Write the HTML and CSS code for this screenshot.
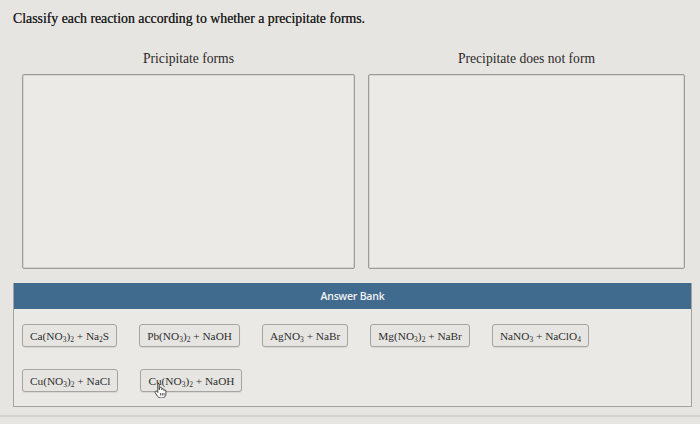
FILE: index.html
```html
<!DOCTYPE html>
<html lang="en">
<head>
  <meta charset="UTF-8">
  <title>Classify Reactions</title>
  <link rel="stylesheet" href="styles.css">
</head>
<body>
  <div class="page">
    <h1 class="prompt">Classify each reaction according to whether a precipitate forms.</h1>

    <!-- Drop zones -->
    <div class="zones">
      <div class="zone">
        <div class="zone-label">Pricipitate forms</div>
        <div class="zone-box"></div>
      </div>
      <div class="zone">
        <div class="zone-label">Precipitate does not form</div>
        <div class="zone-box"></div>
      </div>
    </div>

    <!-- Answer bank -->
    <div class="bank">
      <div class="bank-header">Answer Bank</div>
      <div class="bank-body">
        <div class="tile">Ca(NO<sub>3</sub>)<sub>2</sub> + Na<sub>2</sub>S</div>
        <div class="tile">Pb(NO<sub>3</sub>)<sub>2</sub> + NaOH</div>
        <div class="tile">AgNO<sub>3</sub> + NaBr</div>
        <div class="tile">Mg(NO<sub>3</sub>)<sub>2</sub> + NaBr</div>
        <div class="tile">NaNO<sub>3</sub> + NaClO<sub>4</sub></div>
        <div class="tile">Cu(NO<sub>3</sub>)<sub>2</sub> + NaCl</div>
        <div class="tile">Cu(NO<sub>3</sub>)<sub>2</sub> + NaOH
          <svg class="cursor" width="13" height="16" viewBox="0 0 13 16">
            <path d="M4 1.2c.7 0 1.2.5 1.2 1.2v5.2l.3-.1V6.3c0-.6.5-1.1 1.1-1.1s1.1.5 1.1 1.1v1.3c.1-.6.6-1 1.1-1s1.1.5 1.1 1.1v.8c.2-.4.6-.6 1-.6.6 0 1 .5 1 1.1v3.1c0 2.1-1.5 3.8-3.6 3.8H6.3c-1.1 0-2-.5-2.6-1.4L1.2 10.6c-.3-.5-.2-1.1.3-1.4.5-.3 1.1-.2 1.4.2l.9 1.1V2.4c0-.7.5-1.2 1.2-1.2z" fill="#fff" stroke="#333" stroke-width="0.9"/>
            <path d="M6.6 11v2.6M8.3 11v2.6M10 11v2.6" stroke="#333" stroke-width="0.8"/>
          </svg>
        </div>
      </div>
    </div>
    <div class="footer-rule"></div>
  </div>
</body>
</html>
```

FILE: styles.css
```css
/* Base styles */
body {
  margin: 0;
  padding: 0;
  background-color: #e7e5e1;
  color: #333;
  font-family: "Liberation Serif", "Times New Roman", serif;
  height: 424px;
  overflow: hidden;
}

.page {
  padding: 10px 10px 0 13px;
}

.prompt {
  margin: 0;
  font-size: 13.8px;
  font-weight: normal;
  line-height: 18px;
  color: #222;
  text-shadow: 0 0 0.2px #333;
}

/* Drop zones */
.zones {
  display: grid;
  grid-template-columns: 333px 317px;
  column-gap: 13px;
  margin: 22px 0 0 9px;
}

.zone-label {
  text-align: center;
  font-size: 13.6px;
  line-height: 18px;
  color: #2a2a2a;
  margin-bottom: 6px;
}

.zone-box {
  height: 193px;
  border: 1px solid #9d9c9a;
  border-radius: 2px;
  background-color: #ebeae7;
  box-shadow: inset 0 0 0 1px #d6d5d2;
}

/* Answer bank */
.bank {
  margin-top: 14px;
  width: 677px;
  border: 1px solid #a3a3a2;
  border-top: none;
  background-color: #eae9e6;
}

.bank-header {
  height: 26px;
  line-height: 26px;
  background-color: #416a8f;
  color: #f2f2f2;
  text-align: center;
  font-family: "Open Sans", "Liberation Sans", sans-serif;
  font-weight: 600;
  font-size: 10.5px;
  letter-spacing: -0.2px;
}

.bank-body {
  display: flex;
  flex-wrap: wrap;
  align-content: flex-start;
  column-gap: 22px;
  row-gap: 22px;
  padding: 15px 8px 0 8px;
  height: 82px;
}

.tile {
  position: relative;
  height: 23px;
  line-height: 22px;
  box-sizing: border-box;
  padding: 0 7px;
  border: 1px solid #a6a5a3;
  border-radius: 3px;
  background-color: #e6e5e2;
  box-shadow: 0 1px 1px rgba(0, 0, 0, 0.08);
  font-size: 11.3px;
  color: #2e2e2e;
  white-space: nowrap;
}

.tile sub {
  font-size: 7.5px;
  vertical-align: -2px;
  line-height: 0;
}

/* Pointer hovering the last tile */
.cursor {
  position: absolute;
  left: 13px;
  top: 12px;
}

.footer-rule {
  margin: 8px 0 0 -13px;
  height: 2px;
  width: 720px;
  background-color: #d4d2ce;
}
```
